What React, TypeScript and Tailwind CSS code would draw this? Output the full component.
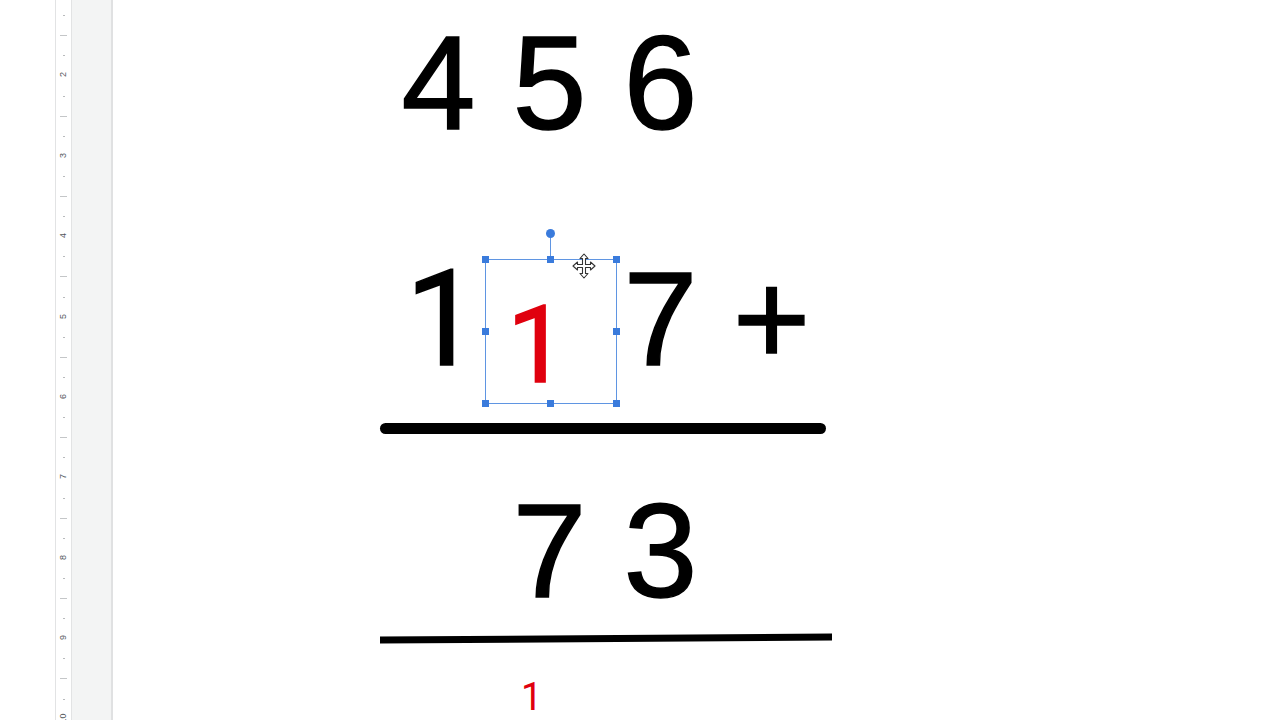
import React from "react";

const font = { fontFamily: '"Liberation Sans", Arial, sans-serif' };
const one = { fontFamily: 'Roboto, "Noto Sans", sans-serif' };

function Ruler() {
  const ticks: React.ReactNode[] = [];
  const step = 80.4 / 4;
  for (let k = 0; k < 40; k++) {
    const y = -5 + k * step;
    if (y > 730) break;
    if (k % 4 === 0) {
      const n = k / 4 + 1;
      if (n === 1) continue;
      ticks.push(
        <span
          key={k}
          className="absolute left-0 w-full text-center text-[9px] leading-none text-[#55595d] -rotate-90"
          style={{ top: y - 5 }}
        >
          {n}
        </span>
      );
    } else if (k % 4 === 2) {
      ticks.push(
        <span key={k} className="absolute left-[4px] w-[7px] h-px bg-[#c4c6c8]" style={{ top: y }} />
      );
    } else {
      ticks.push(
        <span key={k} className="absolute left-[7px] w-[2px] h-px bg-[#b8babc]" style={{ top: y }} />
      );
    }
  }
  return (
    <div className="relative w-[17px] h-full bg-white border-x border-[#e2e3e4] overflow-hidden" style={font}>
      {ticks}
    </div>
  );
}

function Handle({ x, y }: { x: string; y: string }) {
  return <span className={`absolute w-[7px] h-[7px] bg-[#3a7bdc] ${x} ${y}`} />;
}

function SelectionBox() {
  return (
    <div className="absolute left-[-9px] top-[6px] w-[132px] h-[145px] border border-[#5f95e2]">
      <div
        className="pl-[21px] pt-[32px] text-[107px] leading-none text-[#e0000e] text-left [-webkit-text-stroke:1.5px_#e0000e]"
        style={one}
      >
        1
      </div>
      {/* rotation handle */}
      <span className="absolute left-[64px] top-[-24px] w-px h-[24px] bg-[#5f95e2]" />
      <span className="absolute left-[60px] top-[-31px] w-[9px] h-[9px] rounded-full bg-[#3a7bdc]" />
      <Handle x="left-[-4px]" y="top-[-4px]" />
      <Handle x="left-[61px]" y="top-[-4px]" />
      <Handle x="right-[-4px]" y="top-[-4px]" />
      <Handle x="left-[-4px]" y="top-[68px]" />
      <Handle x="right-[-4px]" y="top-[68px]" />
      <Handle x="left-[-4px]" y="bottom-[-4px]" />
      <Handle x="left-[61px]" y="bottom-[-4px]" />
      <Handle x="right-[-4px]" y="bottom-[-4px]" />
      {/* move cursor */}
      <svg className="absolute left-[86px] top-[-7px]" width="24" height="26" viewBox="0 0 24 26">
        <path
          d="M12 1 L16 5.5 L13.5 5.5 L13.5 11.5 L18.5 11.5 L18.5 9 L23 13 L18.5 17 L18.5 14.5 L13.5 14.5 L13.5 20.5 L16 20.5 L12 25 L8 20.5 L10.5 20.5 L10.5 14.5 L5.5 14.5 L5.5 17 L1 13 L5.5 9 L5.5 11.5 L10.5 11.5 L10.5 5.5 L8 5.5 Z"
          fill="white"
          stroke="#333"
          strokeWidth="1.1"
          strokeLinejoin="round"
        />
      </svg>
    </div>
  );
}

const row =
  "grid grid-cols-[111px_111px_111px_111px] h-[133px] text-[133px] leading-none text-center [-webkit-text-stroke:1.5px_black]";

export default function App() {
  return (
    <div className="w-[1280px] h-[720px] flex bg-white overflow-hidden" style={font}>
      <div className="w-[55px] h-full bg-white" />
      <Ruler />
      <div className="w-[41px] h-full bg-[#f3f4f4] border-r-2 border-[#e0e1e2]" />
      <div className="flex-1 h-full bg-white">
        <div className="ml-[267px] w-[460px] flex flex-col text-black">
          <div className={`mt-[17px] ml-[3px] ${row}`}>
            <div>4</div>
            <div>5</div>
            <div>6</div>
            <div />
          </div>
          <div className={`mt-[103px] ml-[3px] ${row}`}>
            <div className="pl-[8px]" style={one}>1</div>
            <div className="relative">
              <SelectionBox />
            </div>
            <div>7</div>
            <div>+</div>
          </div>
          <div className="mt-[37px] w-[446px] h-[11px] rounded-full bg-black" />
          <div className={`mt-[51px] ml-[3px] ${row}`}>
            <div />
            <div>7</div>
            <div>3</div>
            <div />
          </div>
          <div className="mt-[17px] w-[452px] h-[7px] bg-black -rotate-[0.4deg]" />
          <div className="mt-[36px] ml-[141px] text-[38px] leading-none text-[#e0000e]" style={one}>1</div>
        </div>
      </div>
    </div>
  );
}
